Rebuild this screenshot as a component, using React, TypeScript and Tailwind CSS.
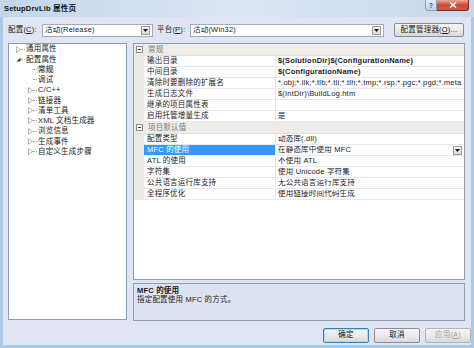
import type { ReactNode } from "react";

type TreeItem = { label: string; level: number; exp?: "open" | "closed"; selected?: boolean };

const tree: TreeItem[] = [
  { label: "通用属性", level: 0, exp: "closed" },
  { label: "配置属性", level: 0, exp: "open" },
  { label: "常规", level: 1, selected: true },
  { label: "调试", level: 1 },
  { label: "C/C++", level: 1, exp: "closed" },
  { label: "链接器", level: 1, exp: "closed" },
  { label: "清单工具", level: 1, exp: "closed" },
  { label: "XML 文档生成器", level: 1, exp: "closed" },
  { label: "浏览信息", level: 1, exp: "closed" },
  { label: "生成事件", level: 1, exp: "closed" },
  { label: "自定义生成步骤", level: 1, exp: "closed" },
];

type Row = { name: string; value: string; bold?: boolean; selected?: boolean };

const general: Row[] = [
  { name: "输出目录", value: "$(SolutionDir)$(ConfigurationName)", bold: true },
  { name: "中间目录", value: "$(ConfigurationName)", bold: true },
  { name: "清除时要删除的扩展名", value: "*.obj;*.ilk;*.tlb;*.tli;*.tlh;*.tmp;*.rsp;*.pgc;*.pgd;*.meta;$(TargetPath)" },
  { name: "生成日志文件", value: "$(IntDir)\\BuildLog.htm" },
  { name: "继承的项目属性表", value: "" },
  { name: "启用托管增量生成", value: "是" },
];

const defaults: Row[] = [
  { name: "配置类型", value: "动态库(.dll)" },
  { name: "MFC 的使用", value: "在静态库中使用 MFC", selected: true },
  { name: "ATL 的使用", value: "不使用 ATL" },
  { name: "字符集", value: "使用 Unicode 字符集" },
  { name: "公共语言运行库支持", value: "无公共语言运行库支持" },
  { name: "全程序优化", value: "使用链接时间代码生成" },
];

const Expander = ({ exp }: { exp?: "open" | "closed" }) => (
  <span className="w-[6px] h-full flex items-center justify-center shrink-0">
    {exp === "closed" && (
      <svg width="5" height="7" viewBox="0 0 5 7">
        <path d="M0.5 0.5 L4.5 3.5 L0.5 6.5 Z" fill="white" stroke="#a5a5a5" strokeWidth="0.8" />
      </svg>
    )}
    {exp === "open" && (
      <svg width="5" height="5" viewBox="0 0 5 5">
        <path d="M4.5 0.5 L4.5 4.5 L0.5 4.5 Z" fill="#3c3c3c" />
      </svg>
    )}
  </span>
);

const DropBtn = () => (
  <span className="w-[9px] h-[9px] shrink-0 border border-[#9a9a9a] bg-gradient-to-b from-[#f6f6f6] to-[#d9d9d9] flex items-center justify-center">
    <svg width="5" height="3" viewBox="0 0 5 3">
      <path d="M0 0 L5 0 L2.5 3 Z" fill="#111" />
    </svg>
  </span>
);

const Combo = ({ text, w }: { text: string; w: string }) => (
  <div className={`${w} shrink-0 h-[13px] bg-white border border-[#a3a9b5] flex items-center pl-[2px] pr-[2px]`}>
    <span className="flex-1 truncate">{text}</span>
    <DropBtn />
  </div>
);

const Category = ({ label }: { label: string }) => (
  <div className="h-[12px] shrink-0 bg-[#edece6] border-b border-[#e2e1da] flex items-center">
    <span className="w-[10px] flex justify-center">
      <span className="w-[7px] h-[7px] border border-[#8c8c8c] bg-white flex items-center justify-center">
        <span className="w-[3px] h-px bg-[#333]" />
      </span>
    </span>
    <span className="pl-[4px] text-[#7c7c7c]">{label}</span>
  </div>
);

const PropRow = ({ row }: { row: Row }) => (
  <div className="h-[11px] shrink-0 flex">
    <span className="w-[10px] shrink-0 bg-[#edece6]" />
    <span
      className={`w-[132px] shrink-0 pl-[3px] flex items-center border-b border-r border-[#e8e8e8] whitespace-nowrap overflow-hidden ${
        row.selected ? "bg-[#3399ff] text-white" : ""
      }`}
    >
      {row.name}
    </span>
    <span className="flex-1 min-w-0 pl-[2px] pr-[2px] flex items-center border-b border-[#e8e8e8] overflow-hidden">
      <span className={`flex-1 min-w-0 whitespace-nowrap overflow-hidden ${row.bold ? "font-bold" : ""}`}>{row.value}</span>
      {row.selected && <DropBtn />}
    </span>
  </div>
);

const DlgButton = ({ children, primary, disabled }: { children: ReactNode; primary?: boolean; disabled?: boolean }) => (
  <button
    className={`w-[46px] h-[15px] rounded-[2px] border flex items-center justify-center bg-gradient-to-b from-[#f4f4f4] via-[#ebebeb] to-[#d8d8d8] ${
      primary ? "border-[#3c7fb1] shadow-[inset_0_0_0_1px_#a6dcf7]" : disabled ? "border-[#b4b4b4]" : "border-[#8d8d8d]"
    } ${disabled ? "text-[#a0a0a0]" : "text-[#111]"}`}
  >
    {children}
  </button>
);

export default function App() {
  return (
    <div className="w-[474px] h-[348px] overflow-hidden flex flex-col bg-[#a9cbe8] text-[7.5px] leading-none tracking-[0.2px] text-[#1b1b1b] font-['Liberation_Sans','Noto_Sans_CJK_SC',sans-serif]">
      {/* title bar */}
      <div className="h-[17px] shrink-0 flex bg-gradient-to-r from-[#c4d5ea] via-[#dbe6f3] to-[#c7d8ec]">
        <span className="pl-[4px] pt-[5px] font-bold text-[#111] whitespace-nowrap">SetupDrvLib 属性页</span>
        <div className="ml-auto mr-[5px] flex items-start">
          <span className="w-[12px] h-[11px] rounded-bl-[3px] border border-t-0 border-[#8c9db3] bg-gradient-to-b from-[#e6edf6] to-[#c3d1e3] flex items-center justify-center text-[7px] text-[#44556c] font-bold">
            ?
          </span>
          <span className="w-[32px] h-[11px] rounded-br-[3px] border border-t-0 border-l-0 border-[#7d2a24] bg-gradient-to-b from-[#e9a99c] via-[#c9473a] to-[#cf5a45] flex items-center justify-center">
            <svg width="8" height="6" viewBox="0 0 8 6">
              <path d="M1 0.5 L7 5.5 M7 0.5 L1 5.5" stroke="white" strokeWidth="1.6" />
            </svg>
          </span>
        </div>
      </div>

      {/* client area */}
      <div className="flex-1 min-h-0 mx-[3px] mb-[3px] bg-[#dfe5f2] flex flex-col">
        {/* config row */}
        <div className="h-[26px] shrink-0 flex items-center pl-[5px] pr-[4px] whitespace-nowrap">
          <span className="w-[34px] shrink-0">
            配置(<span className="underline">C</span>):
          </span>
          <Combo text="活动(Release)" w="w-[111px]" />
          <span className="ml-[4px] w-[33px] shrink-0">
            平台(<span className="underline">P</span>):
          </span>
          <Combo text="活动(Win32)" w="w-[194px]" />
          <button className="ml-[10px] w-[70px] shrink-0 h-[14px] rounded-[2px] border border-[#8d8d8d] bg-gradient-to-b from-[#f4f4f4] via-[#ebebeb] to-[#d8d8d8]">
            配置管理器(<span className="underline">O</span>)...
          </button>
        </div>

        {/* main */}
        <div className="h-[278px] shrink-0 flex pl-[5px] pr-[6px] gap-[6px]">
          {/* tree */}
          <div className="w-[119px] shrink-0 h-[277px] bg-white border border-[#8e9cb0] whitespace-nowrap overflow-hidden">
            {tree.map((t, i) => (
              <div key={i} className="h-[10.25px] flex items-center" style={{ paddingLeft: 6 + t.level * 12 }}>
                <Expander exp={t.exp} />
                <span className="w-[4px] shrink-0 border-t border-dotted border-[#a8a8a8]" />
                <span className={`px-[1px] ${t.selected ? "bg-[#e2e2e2]" : ""}`}>{t.label}</span>
              </div>
            ))}
          </div>

          {/* grid + description */}
          <div className="flex-1 min-w-0 flex flex-col gap-[3px]">
            <div className="h-[237px] bg-white border border-[#8e9cb0] flex flex-col overflow-hidden">
              <Category label="常规" />
              {general.map((r, i) => (
                <PropRow key={i} row={r} />
              ))}
              <Category label="项目默认值" />
              {defaults.map((r, i) => (
                <PropRow key={i} row={r} />
              ))}
            </div>
            <div className="h-[38px] border border-[#8e9cb0] bg-[#dce3f0] px-[3px] pt-[2px]">
              <div className="h-[9px] font-bold flex items-center">MFC 的使用</div>
              <div className="h-[9px] flex items-center">指定配置使用 MFC 的方式。</div>
            </div>
          </div>
        </div>

        {/* buttons */}
        <div className="flex-1 flex items-center justify-end gap-[5px] pt-[4px]">
          <DlgButton primary>确定</DlgButton>
          <DlgButton>取消</DlgButton>
          <DlgButton disabled>
            应用(<span className="underline">A</span>)
          </DlgButton>
        </div>
      </div>
    </div>
  );
}
